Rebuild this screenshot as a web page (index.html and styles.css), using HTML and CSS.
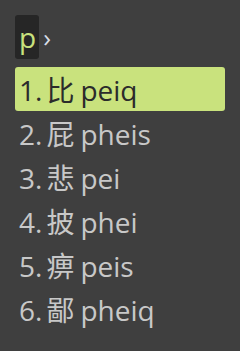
FILE: index.html
```html
<!DOCTYPE html>
<html lang="zh-CN">

<head>
    <meta charset="UTF-8">
    <meta name="viewport" content="width=device-width, initial-scale=1.0">
    <title>候选词</title>
    <link rel="stylesheet" href="styles.css">
</head>

<body>
    <div class="ime">
        <div class="input-row">
            <span class="input-box">p</span>
            <span class="caret">›</span>
        </div>
        <ul class="cand-list">
            <li class="cand active"><span class="num">1.</span><span class="hz">比</span><span class="py">peiq</span></li>
            <li class="cand"><span class="num">2.</span><span class="hz">屁</span><span class="py">pheis</span></li>
            <li class="cand"><span class="num">3.</span><span class="hz">悲</span><span class="py">pei</span></li>
            <li class="cand"><span class="num">4.</span><span class="hz">披</span><span class="py">phei</span></li>
            <li class="cand"><span class="num">5.</span><span class="hz">痹</span><span class="py">peis</span></li>
            <li class="cand"><span class="num">6.</span><span class="hz">鄙</span><span class="py">pheiq</span></li>
        </ul>
    </div>
</body>

</html>
```

FILE: styles.css
```css
body {
    margin: 0;
    padding: 0;
    background-color: #3f3f3f;
    font-family: "Open Sans", "Noto Sans CJK SC", sans-serif;
    font-size: 28px;
}

.ime {
    padding: 15px;
}

.input-row {
    display: flex;
    align-items: center;
    height: 44px;
}

.input-box {
    display: inline-block;
    height: 44px;
    line-height: 44px;
    padding: 0 3px 0 4px;
    background-color: #262626;
    border-radius: 3px;
    color: #c9e27d;
}

.caret {
    margin-left: 4px;
    color: #d6dde6;
    line-height: 44px;
    font-size: 26px;
}

.cand-list {
    list-style: none;
    margin: 8px 0 0;
    padding: 0;
}

.cand {
    display: flex;
    align-items: baseline;
    height: 44px;
    line-height: 44px;
    padding-left: 4px;
    color: #c8c8c8;
}

.cand.active {
    background-color: #c9e27d;
    border-radius: 3px;
    color: #2b2b2b;
}

.hz {
    margin-left: 4px;
    font-family: "Noto Sans CJK SC", sans-serif;
}

.py {
    margin-left: 6px;
}
```
